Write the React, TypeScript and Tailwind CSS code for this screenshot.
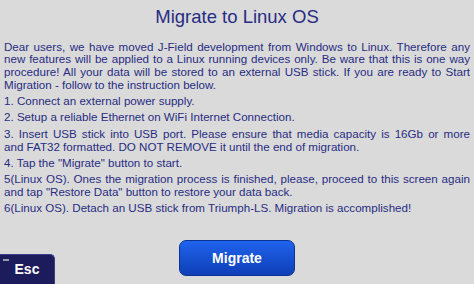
const intro = [
  'Dear users, we have moved J-Field development from Windows to Linux. Therefore any',
  'new features will be applied to a Linux running devices only. Be ware that this is one way',
  'procedure! All your data will be stored to an external USB stick. If you are ready to Start',
  'Migration - follow to the instruction below.',
];

const steps: string[][] = [
  ['1. Connect an external power supply.'],
  ['2. Setup a reliable Ethernet on WiFi Internet Connection.'],
  [
    '3. Insert USB stick into USB port. Please ensure that media capacity is 16Gb or more',
    'and FAT32 formatted. DO NOT REMOVE it until the end of migration.',
  ],
  ['4. Tap the "Migrate" button to start.'],
  [
    '5(Linux OS). Ones the migration process is finished, please, proceed to this screen again',
    'and tap "Restore Data" button to restore your data back.',
  ],
  ['6(Linux OS). Detach an USB stick from Triumph-LS. Migration is accomplished!'],
];

function Para({ lines }: { lines: string[] }) {
  return (
    <div>
      {lines.map((l, i) => (
        <div
          key={i}
          className={i < lines.length - 1 ? 'text-justify [text-align-last:justify]' : ''}
        >
          {l}
        </div>
      ))}
    </div>
  );
}

export default function App() {
  return (
    <div
      className="w-[474px] h-[284px] bg-[#dadada] flex flex-col overflow-hidden text-[#282c82]"
      style={{ fontFamily: '"Liberation Sans", Arial, sans-serif' }}
    >
      <h1 className="text-center text-[18.5px] leading-none pt-[8px] pb-[14px]">Migrate to Linux OS</h1>

      <div className="px-[4px] text-[11.6px] leading-[12.8px] flex flex-col gap-[3.5px]">
        <Para lines={intro} />
        {steps.map((s, i) => (
          <Para key={i} lines={s} />
        ))}
      </div>

      <div className="mt-auto grid grid-cols-[1fr_auto_1fr] items-end">
        <button className="justify-self-start relative w-[55px] h-[30px] bg-[#1c1b5c] rounded-tr-[5px] border-t border-r border-[#3b3d8a] text-white font-bold text-[14px]">
          <span className="absolute left-[3px] top-[4px] w-[6px] h-[2px] bg-[#9a9aa8]" />
          Esc
        </button>
        <button className="mb-[8px] w-[116px] h-[36px] rounded-[7px] bg-gradient-to-b from-[#1f63ee] to-[#0f3fb6] border border-[#0c3294] text-white font-bold text-[14px]">
          Migrate
        </button>
        <div />
      </div>
    </div>
  );
}
